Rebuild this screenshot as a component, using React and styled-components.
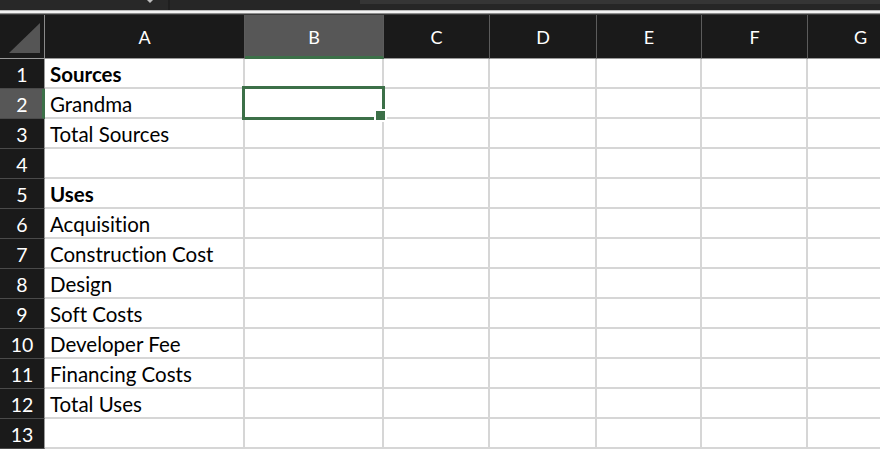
import React from "react";
import styled, { createGlobalStyle, css } from "styled-components";

const GREEN = "#3c7048";

const Global = createGlobalStyle`
  html, body { margin: 0; padding: 0; background: #ffffff; }
  body {
    font-family: Lato, "Noto Sans", sans-serif;
    overflow: hidden;
    font-variant-ligatures: none;
    font-feature-settings: "liga" 0;
  }
`;

const Page = styled.div`
  width: 880px;
  height: 450px;
  overflow: hidden;
  display: flex;
  flex-direction: column;
  background: #ffffff;
`;

const TopBar = styled.div`
  height: 10px;
  flex: none;
  display: flex;
  background: #272727;
`;

const NameBox = styled.div`
  width: 170px;
  display: flex;
  justify-content: flex-end;
  align-items: flex-start;
  padding-right: 15px;
  box-sizing: border-box;
  background: #282828;
  border-right: 2px solid #1f1f1f;
`;

const Caret = styled.div`
  width: 0;
  height: 0;
  border-left: 3px solid transparent;
  border-right: 3px solid transparent;
  border-top: 3px solid #bdbdbd;
`;

const FormulaGap = styled.div`
  width: 190px;
  background: #262626;
`;

const FormulaInput = styled.div`
  flex: 1;
  background: linear-gradient(#353535 0 4px, #262626 4px);
`;

const Splitter = styled.div`
  height: 5px;
  flex: none;
  background: linear-gradient(#bcbcbc 0 1px, #f2f2f2 1px 3px, #8c8c8c 3px 4px, #3a3a3a 4px);
`;

const Grid = styled.div`
  display: grid;
  grid-template-columns: 45px 200px 139px 106px 107px 105px 106px 106px;
  grid-template-rows: 44px repeat(13, 30px);
  background: #ffffff;
`;

const Corner = styled.div`
  background: #1a1a1a;
  border-right: 1px solid #8a8a8a;
  border-bottom: 1px solid #9a9a9a;
  display: flex;
  align-items: flex-end;
  justify-content: flex-end;
  padding: 0 4px 5px 0;
  box-sizing: border-box;
`;

const ColHead = styled.div`
  box-sizing: border-box;
  background: ${(p) => (p.$active ? "#575757" : "#1a1a1a")};
  border-right: 1px solid #5c5c5c;
  border-bottom: ${(p) => (p.$active ? `3px solid ${GREEN}` : "1px solid #9a9a9a")};
  color: #ffffff;
  font-size: 18px;
  display: flex;
  align-items: center;
  justify-content: center;
  padding: ${(p) => (p.$active ? "2px 0 0 0" : "0")};
`;

const RowHead = styled.div`
  box-sizing: border-box;
  background: ${(p) => (p.$active ? "#575757" : "#1a1a1a")};
  border-bottom: 1px solid #4a4a4a;
  border-right: ${(p) => (p.$active ? `3px solid ${GREEN}` : "1px solid #9a9a9a")};
  color: #ffffff;
  font-size: 19.5px;
  display: flex;
  align-items: center;
  justify-content: center;
  padding-left: ${(p) => (p.$active ? "2px" : "0")};
  padding-top: 1px;
`;

const Cell = styled.div`
  position: relative;
  box-sizing: border-box;
  border-right: 2px solid #d6d6d6;
  border-bottom: 2px solid #d6d6d6;
  color: #000000;
  font-size: 20.5px;
  line-height: 1;
  padding: 2px 0 0 5px;
  display: flex;
  align-items: center;
  white-space: nowrap;
  font-weight: ${(p) => (p.$bold ? 700 : 400)};
  ${(p) =>
    p.$selected &&
    css`
      z-index: 2;
    `}
`;

const Selection = styled.div`
  position: absolute;
  left: -3px;
  top: -3px;
  right: -3px;
  bottom: -3px;
  border: 3px solid ${GREEN};
  pointer-events: none;
`;

const Handle = styled.div`
  position: absolute;
  right: -5px;
  bottom: -5px;
  width: 9px;
  height: 9px;
  background: ${GREEN};
  border: 2px solid #ffffff;
`;

const columns = ["A", "B", "C", "D", "E", "F", "G"];

const rows = [
  { text: "Sources", bold: true },
  { text: "Grandma" },
  { text: "Total Sources" },
  { text: "" },
  { text: "Uses", bold: true },
  { text: "Acquisition" },
  { text: "Construction Cost" },
  { text: "Design" },
  { text: "Soft Costs" },
  { text: "Developer Fee" },
  { text: "Financing Costs" },
  { text: "Total Uses" },
  { text: "" },
];

export default function App() {
  return (
    <Page>
      <Global />
      <TopBar>
        <NameBox>
          <Caret />
        </NameBox>
        <FormulaGap />
        <FormulaInput />
      </TopBar>
      <Splitter />
      <Grid>
        <Corner>
          <svg width="31" height="30" viewBox="0 0 31 30">
            <polygon points="31,0 31,30 0,30" fill="#555555" />
          </svg>
        </Corner>
        {columns.map((c) => (
          <ColHead key={c} $active={c === "B"}>
            {c}
          </ColHead>
        ))}
        {rows.map((r, i) => {
          const n = i + 1;
          return (
            <React.Fragment key={n}>
              <RowHead $active={n === 2}>{n}</RowHead>
              {columns.map((c) => {
                const sel = n === 2 && c === "B";
                return (
                  <Cell key={c} $bold={c === "A" && r.bold} $selected={sel}>
                    {c === "A" ? r.text : ""}
                    {sel && <Selection />}
                    {sel && <Handle />}
                  </Cell>
                );
              })}
            </React.Fragment>
          );
        })}
      </Grid>
    </Page>
  );
}
